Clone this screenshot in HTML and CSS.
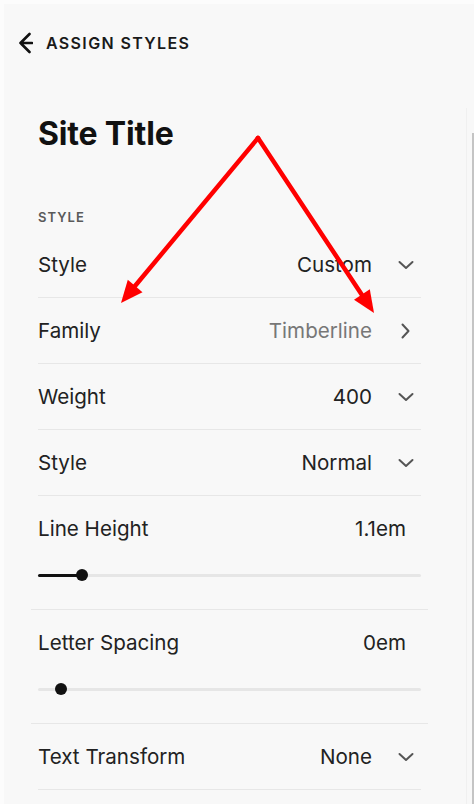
FILE: index.html
```html
<!DOCTYPE html>
<html lang="en">
<head>
<meta charset="utf-8">
<title>Assign Styles</title>
<link rel="stylesheet" href="styles.css">
</head>
<body>
<div class="panel">
  <header class="header">
    <svg class="back" width="16" height="22" viewBox="0 0 16 22"><path d="M12.5 2 L3.5 11 L12.5 20 M3.5 11 L15 11" fill="none" stroke="#111" stroke-width="2.6" stroke-linecap="round" stroke-linejoin="round"/></svg>
    <span class="header-text">ASSIGN STYLES</span>
  </header>
  <main class="content">
    <h1 class="title">Site Title</h1>
    <div class="section-label">STYLE</div>

    <div class="row">
      <span class="label">Style</span>
      <span class="value">Custom</span>
      <svg class="chev" width="16" height="16" viewBox="0 0 16 16"><path d="M1.5 5 L8 11 L14.5 5" fill="none" stroke="#555" stroke-width="2" stroke-linecap="round" stroke-linejoin="round"/></svg>
    </div>
    <div class="row">
      <span class="label">Family</span>
      <span class="value muted">Timberline</span>
      <svg class="chev" width="16" height="16" viewBox="0 0 16 16"><path d="M4.5 1.5 L10.5 8 L4.5 14.5" fill="none" stroke="#555" stroke-width="2" stroke-linecap="round" stroke-linejoin="round"/></svg>
    </div>
    <div class="row">
      <span class="label">Weight</span>
      <span class="value">400</span>
      <svg class="chev" width="16" height="16" viewBox="0 0 16 16"><path d="M1.5 5 L8 11 L14.5 5" fill="none" stroke="#555" stroke-width="2" stroke-linecap="round" stroke-linejoin="round"/></svg>
    </div>
    <div class="row">
      <span class="label">Style</span>
      <span class="value">Normal</span>
      <svg class="chev" width="16" height="16" viewBox="0 0 16 16"><path d="M1.5 5 L8 11 L14.5 5" fill="none" stroke="#555" stroke-width="2" stroke-linecap="round" stroke-linejoin="round"/></svg>
    </div>

    <div class="slider-section">
      <div class="row plain">
        <span class="label">Line Height</span>
        <span class="value slider-value">1.1em</span>
      </div>
      <div class="slider">
        <div class="track">
          <div class="fill" style="width:44px"></div>
          <div class="thumb" style="left:44px"></div>
        </div>
      </div>
    </div>

    <div class="slider-section">
      <div class="row plain">
        <span class="label">Letter Spacing</span>
        <span class="value slider-value">0em</span>
      </div>
      <div class="slider">
        <div class="track">
          <div class="fill" style="width:0px"></div>
          <div class="thumb" style="left:23px"></div>
        </div>
      </div>
    </div>

    <div class="row">
      <span class="label">Text Transform</span>
      <span class="value">None</span>
      <svg class="chev" width="16" height="16" viewBox="0 0 16 16"><path d="M1.5 5 L8 11 L14.5 5" fill="none" stroke="#555" stroke-width="2" stroke-linecap="round" stroke-linejoin="round"/></svg>
    </div>
  </main>
</div>

<div class="scroll-track"><div class="scroll-thumb"></div></div>

<svg class="annotation" width="474" height="804" viewBox="0 0 474 804">
  <line x1="258" y1="138" x2="135" y2="286" stroke="#f00" stroke-width="4.5" stroke-linecap="round"/>
  <polygon points="121,303 142.5,292.2 127.8,279.8" fill="#f00"/>
  <line x1="258" y1="138" x2="362" y2="295" stroke="#f00" stroke-width="4.5" stroke-linecap="round"/>
  <polygon points="374,313 369.8,289.2 354,299.8" fill="#f00"/>
</svg>
</body>
</html>
```

FILE: styles.css
```css
html, body {
  margin: 0;
  padding: 0;
}
body {
  background: #fcfcfc;
  font-family: Inter, "Noto Sans", "Liberation Sans", sans-serif;
  color: #1c1c1c;
  width: 474px;
  height: 804px;
  overflow: hidden;
  position: relative;
}
.panel {
  margin: 4px 0 0 4px;
  background: #f8f8f8;
  height: 800px;
}
.header {
  display: flex;
  align-items: center;
  height: 78px;
  padding-left: 13px;
}
.back {
  display: block;
}
.header-text {
  margin-left: 13px;
  font-size: 16px;
  font-weight: 600;
  letter-spacing: 0.085em;
  color: #1a1a1a;
}
.content {
  padding: 0 53px 0 34px;
}
.title {
  margin: 32px 0 0 0;
  font-size: 32px;
  line-height: 40px;
  font-weight: 700;
  color: #111;
  letter-spacing: -0.005em;
}
.section-label {
  margin-top: 55px;
  font-size: 13px;
  line-height: 16px;
  font-weight: 600;
  letter-spacing: 0.08em;
  color: #5a5a5a;
}
.row {
  display: flex;
  align-items: center;
  height: 65px;
  border-bottom: 1px solid #e7e7e7;
  font-size: 20.6px;
}
.section-label + .row {
  margin-top: 7px;
}
.row.plain {
  border-bottom: none;
}
.label {
  flex: 1;
  color: #222;
}
.value {
  color: #222;
}
.value.muted {
  color: #777;
}
.chev {
  display: block;
  margin-left: 26px;
  margin-right: 7px;
}
.slider-value {
  margin-right: 15px;
}
.slider-section {
  margin: 0 -7px;
  padding: 0 7px 20px 7px;
  border-bottom: 1px solid #e7e7e7;
}
.slider {
  height: 28px;
  display: flex;
  align-items: center;
}
.track {
  position: relative;
  width: 100%;
  height: 3px;
  background: #e6e6e6;
  border-radius: 2px;
}
.fill {
  height: 3px;
  background: #111;
  border-radius: 2px;
}
.thumb {
  position: absolute;
  top: 50%;
  width: 12px;
  height: 12px;
  margin: -6px 0 0 -6px;
  border-radius: 50%;
  background: #111;
}
.scroll-track {
  position: absolute;
  left: 466px;
  top: 108px;
  width: 8px;
  height: 696px;
  border-left: 1px solid #f0f0f0;
  box-sizing: border-box;
}
.scroll-thumb {
  position: absolute;
  right: 0;
  top: 25px;
  width: 2px;
  height: 671px;
  background: #c4c4c4;
}
.annotation {
  position: absolute;
  left: 0;
  top: 0;
  pointer-events: none;
}
```
